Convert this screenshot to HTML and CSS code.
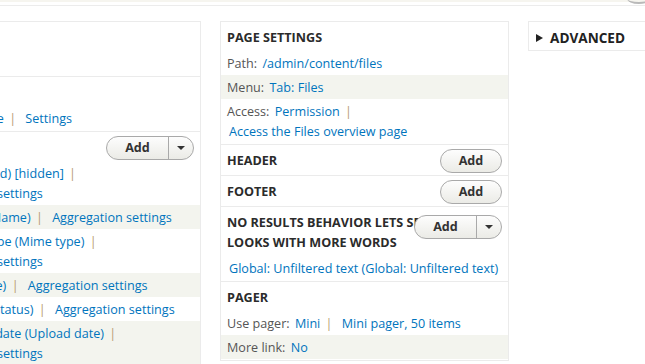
FILE: index.html
```html
<!DOCTYPE html>
<html lang="en">
<head>
<meta charset="utf-8">
<title>Views UI – Files</title>
<link rel="stylesheet" href="styles.css">
</head>
<body>
<div class="page">
  <div class="top-strip"></div>
  <div class="top-rule"></div>
  <div class="corner-shadow"></div>

  <div class="columns">
    <div class="col col-first">
      <div class="bucket">
        <div class="bucket-head"><h3 class="bucket-title">Title</h3></div>
        <div class="setting"><span class="label">Title:</span> <a class="link">Files</a></div>
      </div>
      <div class="bucket">
        <div class="bucket-head"><h3 class="bucket-title">Format</h3></div>
        <div class="setting"><span class="label">Format:</span> <a class="link">Table</a> <span class="sep">|</span> <a class="link">Settings</a></div>
      </div>
      <div class="bucket">
        <div class="bucket-head">
          <h3 class="bucket-title">Fields</h3>
          <div class="dropbutton"><span class="db-main">Add</span><span class="db-toggle"><span class="caret"></span></span></div>
        </div>
        <div class="setting"><a class="link">File: File ID (fid) [hidden]</a> <span class="sep">|</span> <a class="link">Aggregation settings</a></div>
        <div class="setting even"><a class="link">File: Name (Name)</a> <span class="sep">|</span> <a class="link">Aggregation settings</a></div>
        <div class="setting"><a class="link">File: Mime type (Mime type)</a> <span class="sep">|</span> <a class="link">Aggregation settings</a></div>
        <div class="setting even"><a class="link">File: Size (Size)</a> <span class="sep">|</span> <a class="link">Aggregation settings</a></div>
        <div class="setting"><a class="link">File: Status (Status)</a> <span class="sep">|</span> <a class="link">Aggregation settings</a></div>
        <div class="setting even"><a class="link">File: Upload date (Upload date)</a> <span class="sep">|</span> <a class="link">Aggregation settings</a></div>
      </div>
    </div>

    <div class="col">
      <div class="bucket">
        <div class="bucket-head"><h3 class="bucket-title">Page settings</h3></div>
        <div class="setting"><span class="label">Path:</span> <a class="link">/admin/content/files</a></div>
        <div class="setting even"><span class="label">Menu:</span> <a class="link">Tab: Files</a></div>
        <div class="setting"><span class="label">Access:</span> <a class="link">Permission</a> <span class="sep">|</span> <a class="link">Access the Files overview page</a></div>
      </div>
      <div class="bucket">
        <div class="bucket-head">
          <h3 class="bucket-title">Header</h3>
          <div class="dropbutton single"><span class="db-main">Add</span></div>
        </div>
      </div>
      <div class="bucket">
        <div class="bucket-head">
          <h3 class="bucket-title">Footer</h3>
          <div class="dropbutton single"><span class="db-main">Add</span></div>
        </div>
      </div>
      <div class="bucket">
        <div class="bucket-head overlaid">
          <h3 class="bucket-title">No results behavior lets see how it looks with more words</h3>
          <div class="dropbutton"><span class="db-main">Add</span><span class="db-toggle"><span class="caret"></span></span></div>
        </div>
        <div class="setting"><a class="link">Global: Unfiltered text (Global: Unfiltered text)</a></div>
      </div>
      <div class="bucket">
        <div class="bucket-head"><h3 class="bucket-title">Pager</h3></div>
        <div class="setting"><span class="label">Use pager:</span> <a class="link">Mini</a> <span class="sep">|</span> <a class="link">Mini pager, 50 items</a></div>
        <div class="setting even"><span class="label">More link:</span> <a class="link">No</a></div>
      </div>
    </div>

    <div class="col">
      <div class="advanced"><span class="triangle"></span><span class="advanced-title">Advanced</span></div>
    </div>
  </div>
</div>
</body>
</html>
```

FILE: styles.css
```css
html, body {
  margin: 0;
  padding: 0;
  background: #ffffff;
}

body {
  font-family: "Open Sans", "Noto Sans", sans-serif;
  font-size: 12.6px;
  line-height: 20px;
  color: #555555;
  overflow: hidden;
}

.page {
  position: relative;
  width: 645px;
  height: 364px;
  overflow: hidden;
}

.top-strip {
  height: 2px;
  background: #f6f5ef;
}

.top-rule {
  margin-top: 3px;
  height: 0;
  border-top: 1px solid #ececec;
}

.corner-shadow {
  position: absolute;
  top: -7px;
  right: -6px;
  width: 24px;
  height: 9px;
  border-radius: 50%;
  border-bottom: 2px solid #b9b9b9;
}

.columns {
  display: flex;
  align-items: flex-start;
  gap: 19px;
  margin-top: 15px;
  margin-left: -88px;
}

.col {
  flex: 0 0 289px;
  box-sizing: border-box;
  border: 1px solid #ebebeb;
  background: #ffffff;
}

.bucket {
  padding-bottom: 1px;
}

.bucket + .bucket {
  border-top: 1px solid #ebebeb;
}

.bucket-head {
  display: flex;
  justify-content: space-between;
  align-items: flex-start;
  padding: 0 6px;
}

.bucket-head.overlaid {
  position: relative;
}

.bucket-head.overlaid .dropbutton {
  position: absolute;
  top: 4px;
  right: 6px;
}

.bucket-title {
  margin: 0;
  padding: 6px 0 3px;
  font-size: 12.6px;
  line-height: 20px;
  font-weight: bold;
  text-transform: uppercase;
  color: #2b2b2b;
}

.setting {
  padding: 3px 6px 1px;
  line-height: 20px;
  color: #555555;
}

.col-first .setting {
  padding-left: 8px;
}

.setting.even {
  background: #f3f4ee;
}

.link {
  display: inline-block;
  white-space: nowrap;
  padding: 0 2px;
  color: #0074bd;
  text-decoration: none;
}

.sep {
  margin-right: 4px;
  color: #b69a70;
}

.dropbutton {
  display: flex;
  margin-top: 4px;
  height: 24px;
  box-sizing: border-box;
  border: 1px solid #a9a9a9;
  border-radius: 12px;
  background: linear-gradient(#fdfdfd, #ebebe6);
  font-weight: bold;
  font-size: 12.6px;
  line-height: 22px;
  color: #333333;
}

.db-main {
  width: 61px;
  text-align: center;
}

.dropbutton.single .db-main {
  width: 60px;
}

.db-toggle {
  width: 24px;
  border-left: 1px solid #a9a9a9;
  display: flex;
  align-items: center;
  justify-content: center;
}

.caret {
  width: 0;
  height: 0;
  border-left: 4px solid transparent;
  border-right: 4px solid transparent;
  border-top: 4px solid #333333;
}

.advanced {
  display: flex;
  align-items: center;
  gap: 7px;
  padding: 6px 7px 2px;
}

.triangle {
  width: 0;
  height: 0;
  border-top: 4px solid transparent;
  border-bottom: 4px solid transparent;
  border-left: 7px solid #222222;
}

.advanced-title {
  font-size: 13.6px;
  line-height: 20px;
  font-weight: bold;
  text-transform: uppercase;
  color: #222222;
}
```
